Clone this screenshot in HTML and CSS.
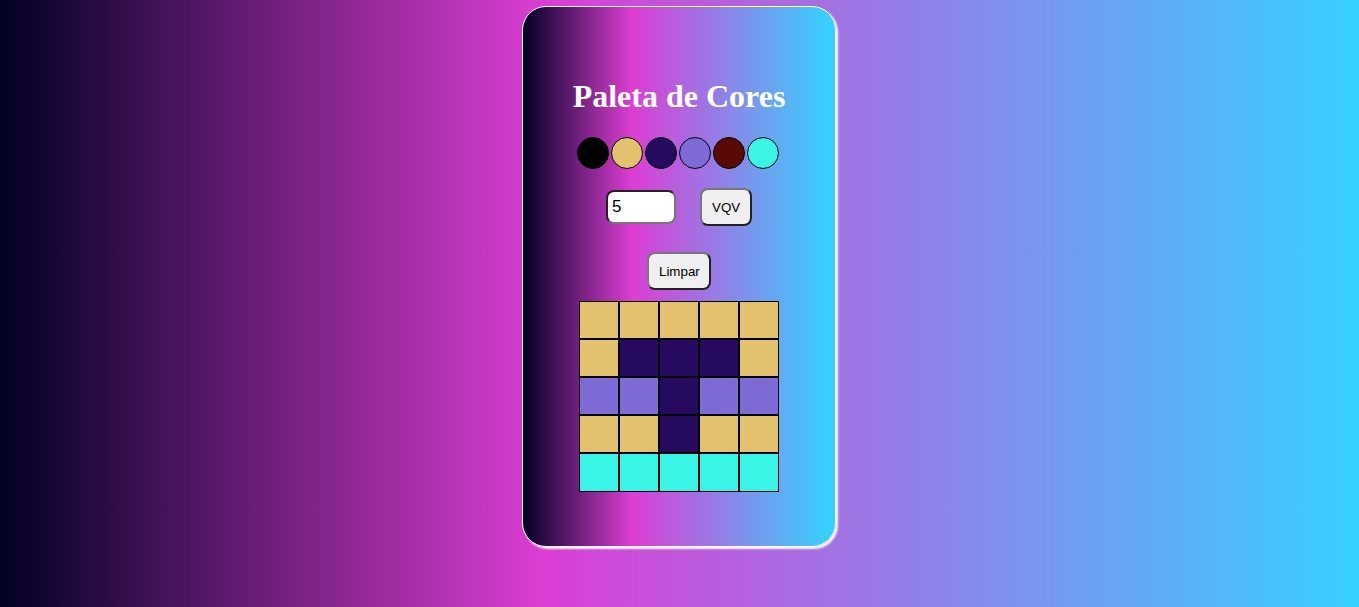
FILE: index.html
```html
<!DOCTYPE html>
<html lang="pt-BR">
<head>
<meta charset="utf-8">
<title>Paleta de Cores</title>
<link rel="stylesheet" href="styles.css">
</head>
<body>
<main class="card">
  <h1 class="title">Paleta de Cores</h1>
  <div class="palette">
    <div class="color c-black"></div>
    <div class="color c-sand"></div>
    <div class="color c-indigo"></div>
    <div class="color c-lavender"></div>
    <div class="color c-maroon"></div>
    <div class="color c-aqua"></div>
  </div>
  <div class="controls">
    <input class="size-input" type="text" value="5">
    <button class="btn btn-vqv">VQV</button>
  </div>
  <button class="btn btn-clear">Limpar</button>
  <div class="board">
    <div class="row"><div class="pixel c-sand"></div><div class="pixel c-sand"></div><div class="pixel c-sand"></div><div class="pixel c-sand"></div><div class="pixel c-sand"></div></div>
    <div class="row"><div class="pixel c-sand"></div><div class="pixel c-indigo"></div><div class="pixel c-indigo"></div><div class="pixel c-indigo"></div><div class="pixel c-sand"></div></div>
    <div class="row"><div class="pixel c-lavender"></div><div class="pixel c-lavender"></div><div class="pixel c-indigo"></div><div class="pixel c-lavender"></div><div class="pixel c-lavender"></div></div>
    <div class="row"><div class="pixel c-sand"></div><div class="pixel c-sand"></div><div class="pixel c-indigo"></div><div class="pixel c-sand"></div><div class="pixel c-sand"></div></div>
    <div class="row row-last"><div class="pixel c-aqua"></div><div class="pixel c-aqua"></div><div class="pixel c-aqua"></div><div class="pixel c-aqua"></div><div class="pixel c-aqua"></div></div>
  </div>
</main>
</body>
</html>
```
FILE: styles.css
```css
html, body {
  margin: 0;
  padding: 0;
  height: 100%;
}
body {
  box-sizing: border-box;
  padding-right: 1px;
  background: linear-gradient(90deg, #020024 0%, #dc3ed3 40%, #36d1fc 100%);
  font-family: "Liberation Sans", Arial, sans-serif;
  overflow: hidden;
}
.card {
  box-sizing: border-box;
  width: 314px;
  height: 541px;
  margin: 6px auto 0;
  padding-top: 71px;
  border: 1px solid #ffffff;
  border-radius: 24px;
  box-shadow: 2px 2px 2px rgba(255, 255, 255, 0.95);
  background: linear-gradient(90deg, #020024 0%, #dc3ed3 35%, #36d1fc 98%);
  display: flex;
  flex-direction: column;
  align-items: center;
}
.title {
  margin: 0;
  font-family: "Liberation Serif", "Times New Roman", serif;
  font-weight: bold;
  font-size: 32px;
  line-height: 37px;
  color: #ffffff;
}
.palette {
  display: flex;
  gap: 2px;
  margin-top: 22px;
  margin-right: 2px;
}
.color {
  box-sizing: border-box;
  width: 32px;
  height: 32px;
  border: 1px solid #000;
  border-radius: 50%;
}
.c-black { background: #000000; }
.c-sand { background: #e2c16f; }
.c-indigo { background: #250a60; }
.c-lavender { background: #7e6bd6; }
.c-maroon { background: #5a0a05; }
.c-aqua { background: #38f5e5; }
.controls {
  display: flex;
  align-items: center;
  gap: 24px;
  margin-top: 19px;
}
.size-input {
  box-sizing: border-box;
  width: 70px;
  height: 34px;
  padding: 0 4px;
  border: 2px solid;
  border-color: #222 #777 #777 #222;
  border-radius: 8px;
  background: #fff;
  font-family: "Liberation Sans", Arial, sans-serif;
  font-size: 17px;
  color: #000;
  outline: none;
}
.btn {
  box-sizing: border-box;
  height: 38px;
  padding: 0 10px;
  border: 2px solid;
  border-color: #777 #222 #222 #777;
  border-radius: 8px;
  background: #efefef;
  font-family: "Liberation Sans", Arial, sans-serif;
  font-size: 13.33px;
  color: #000;
}
.btn-vqv {
  width: 52px;
}
.btn-clear {
  width: 64px;
  margin-top: 26px;
}
.board {
  margin-top: 11px;
  display: flex;
  flex-direction: column;
}
.row {
  display: flex;
}
.pixel {
  width: 38px;
  height: 36px;
  border: 1px solid #000;
}
.row-last .pixel {
  height: 37px;
}
```
